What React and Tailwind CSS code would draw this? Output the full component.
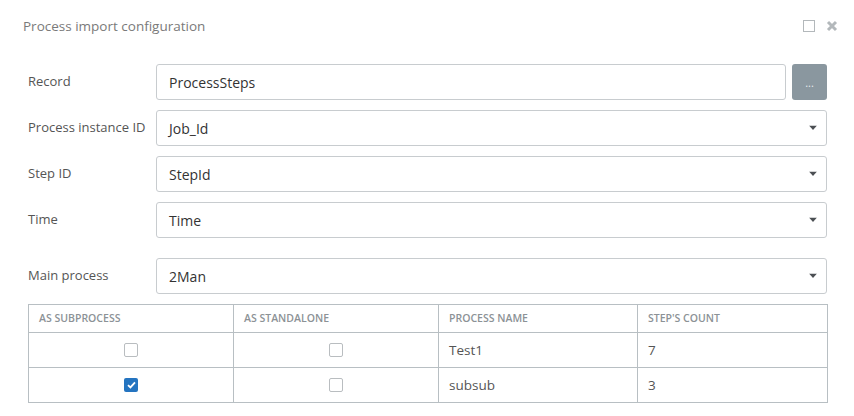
import React from 'react';

const selects = [
  { label: 'Process instance ID', value: 'Job_Id' },
  { label: 'Step ID', value: 'StepId' },
  { label: 'Time', value: 'Time' },
];

const rows = [
  { sub: false, standalone: false, name: 'Test1', count: 7 },
  { sub: true, standalone: false, name: 'subsub', count: 3 },
];

function Caret() {
  return (
    <svg width="8" height="5" viewBox="0 0 8 5" className="absolute right-[9px] top-1/2 -translate-y-1/2">
      <path d="M0 0 H8 L4 4.5 Z" fill="#4b4f53" />
    </svg>
  );
}

function SelectRow({ label, value, className = '' }) {
  return (
    <div className={`flex items-center ${className}`}>
      <div className="w-[128px] text-[13px] text-[#555]">{label}</div>
      <div className="relative flex-1 h-[36px] border border-[#c8cccf] rounded-[3px] flex items-center pl-[12px] text-[14px] text-[#333]">
        {value}
        <Caret />
      </div>
    </div>
  );
}

function Checkbox({ checked }) {
  if (checked) {
    return (
      <span className="inline-flex w-[14px] h-[14px] rounded-[2px] bg-[#2474c0] items-center justify-center">
        <svg width="9" height="8" viewBox="0 0 9 8">
          <path d="M1 4.2 L3.4 6.4 L8 1.4" stroke="#fff" strokeWidth="1.8" fill="none" />
        </svg>
      </span>
    );
  }
  return <span className="inline-block w-[14px] h-[14px] rounded-[2px] border border-[#b9bdc0] bg-white" />;
}

export default function App() {
  return (
    <div className="w-[854px] h-[416px] bg-white overflow-hidden" style={{ fontFamily: '"Open Sans", sans-serif' }}>
      {/* Header */}
      <div className="flex items-center justify-between pl-[23px] pr-[16px] pt-[16px] h-[36px]">
        <div className="text-[13.5px] text-[#7a7a7a] leading-[20px]">Process import configuration</div>
        <div className="flex items-center gap-[11px]">
          <span className="w-[12px] h-[12px] border border-[#b3b8bb]" />
          <svg width="12" height="12" viewBox="0 0 12 12">
            <path d="M2 2 L10 10 M10 2 L2 10" stroke="#b3b8bb" strokeWidth="3" />
          </svg>
        </div>
      </div>

      <div className="pl-[28px] pr-[27px] pt-[28px]">
        {/* Record */}
        <div className="flex items-center">
          <div className="w-[128px] text-[13px] text-[#555]">Record</div>
          <div className="flex-1 h-[36px] border border-[#c8cccf] rounded-[3px] flex items-center pl-[12px] text-[14px] text-[#333]">
            ProcessSteps
          </div>
          <button className="ml-[6px] w-[35px] h-[36px] rounded-[3px] bg-[#8a979f] text-[#e8ecee] text-[11px] leading-none">
            ...
          </button>
        </div>

        <div className="flex flex-col gap-[10px] mt-[10px]">
          {selects.map((s) => (
            <SelectRow key={s.label} label={s.label} value={s.value} />
          ))}
        </div>

        <SelectRow label="Main process" value="2Man" className="mt-[20px]" />

        {/* Table */}
        <table className="mt-[10px] w-[799px] table-fixed border-collapse text-left">
          <colgroup>
            <col className="w-[205px]" />
            <col className="w-[205px]" />
            <col className="w-[199px]" />
            <col className="w-[190px]" />
          </colgroup>
          <thead>
            <tr className="h-[28px] border-b border-[#a3acb1]">
              {['AS SUBPROCESS', 'AS STANDALONE', 'PROCESS NAME', "STEP'S COUNT"].map((h) => (
                <th key={h} className="border border-[#b8bfc3] px-[10px] text-[10.5px] font-semibold text-[#8c9296]">
                  {h}
                </th>
              ))}
            </tr>
          </thead>
          <tbody>
            {rows.map((r) => (
              <tr key={r.name} className="h-[35px]">
                <td className="border border-[#b8bfc3] text-center">
                  <div className="flex justify-center">
                    <Checkbox checked={r.sub} />
                  </div>
                </td>
                <td className="border border-[#b8bfc3] text-center">
                  <div className="flex justify-center">
                    <Checkbox checked={r.standalone} />
                  </div>
                </td>
                <td className="border border-[#b8bfc3] px-[10px] text-[13.5px] text-[#555]">{r.name}</td>
                <td className="border border-[#b8bfc3] px-[10px] text-[13.5px] text-[#555]">{r.count}</td>
              </tr>
            ))}
          </tbody>
        </table>
      </div>
    </div>
  );
}
